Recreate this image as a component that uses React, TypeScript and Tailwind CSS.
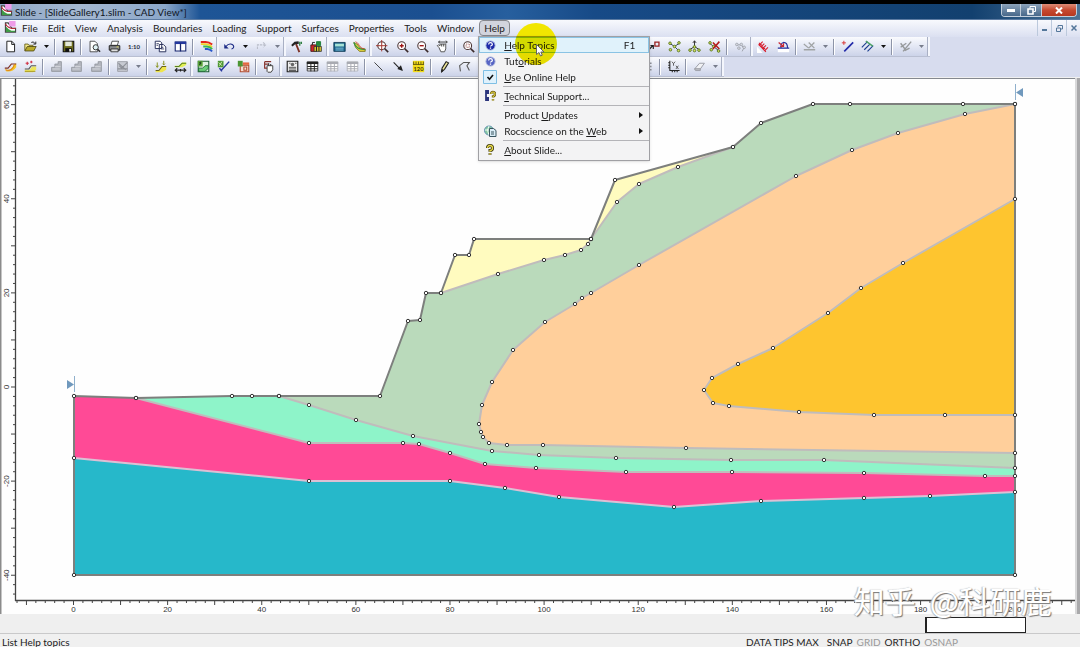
import React from 'react';

type ToolItem = { kind: 'tool'; icon: string; label: string } | { kind: 'caret'; muted?: boolean } | { kind: 'sep' } | { kind: 'end' };

const t = (icon: string, label: string): ToolItem => ({ kind: 'tool', icon, label });
const caret: ToolItem = { kind: 'caret' };
const mutedCaret: ToolItem = { kind: 'caret', muted: true };
const sep: ToolItem = { kind: 'sep' };
const end: ToolItem = { kind: 'end' };

const stroke = (d: string, color = '#222', width = 1.3) => <path d={d} fill="none" stroke={color} strokeWidth={width} />;
const dots = (points: number[][], color = '#4c6b1c', fill = '#d6e25a') =>
  points.map(([x, y]) => <circle key={`${x}-${y}`} cx={x} cy={y} r="1.6" fill={fill} stroke={color} />);

const magnifier = (
  <>
    <circle cx="7" cy="7" r="4.8" fill="#fff" stroke="#4a3434" strokeWidth="1.3" />
    <path d="M10.5 10.5l4.5 4.5" stroke="#3a2a2a" strokeWidth="2" />
  </>
);

const table = (c: string) => (
  <>
    <path d="M1.5 2.5h13v11h-13z" fill="#fff" stroke={c} />
    <path d="M1 2h14v3H1z" fill={c} />
    {stroke('M1.5 8h13M1.5 10.8h13M6 3v11M10.3 3v11', c, 1.2)}
  </>
);

const steps = (
  <>
    <path d="M2 14V9h4V5h4V2h4v12z" fill="#b5b8c0" stroke="#8f929a" />
    {stroke('M3 11h9M6 8h7', '#d6d8de', 1)}
  </>
);

const ICONS: Record<string, React.ReactNode> = {
  new: <path d="M3.5 1.5h6l3.5 3.5v9.5h-9.5zM9.5 1.5v4h3.5" fill="#fff" stroke="#222" strokeWidth="1.2" />,
  open: (
    <>
      <path d="M1 13V5h4l1 1.500h5V9" fill="#f4e98a" stroke="#5a5310" />
      <path d="M1 13.500l3-5.500h11l-3 5.500z" fill="#b8a92c" stroke="#4b4510" />
      {stroke('M9 3q3-2 4.500 1.500M14.500 2v3h-3', '#222', 1.2)}
    </>
  ),
  save: (
    <>
      <path d="M1.500 1.500h13v13h-13z" fill="#6b6b1c" stroke="#111" strokeWidth="1.3" />
      <path d="M4 2h8v5.500H4z" fill="#e4e8d8" />
      <path d="M4 10h8v4.500H4z" fill="#111" />
      <path d="M9 11h2v3H9z" fill="#fff" />
    </>
  ),
  preview: (
    <>
      <path d="M2.500 1.500h6l3 3v10h-9z" fill="#fff" stroke="#333" />
      <circle cx="9.500" cy="9" r="3.2" fill="#dff1f4" stroke="#333" strokeWidth="1.2" />
      {stroke('M11.800 11.300l3 3.200', '#333', 2)}
    </>
  ),
  print: (
    <>
      <path d="M5 1.500h8l-1.500 5H3.500z" fill="#fff" stroke="#333" />
      <path d="M1.500 7h13v5.500h-13z" fill="#8a8c90" stroke="#222" strokeWidth="1.2" />
      <path d="M3.500 11h9v3.500h-9z" fill="#e0e0e0" stroke="#222" />
      <path d="M10.500 8.500h2.500" stroke="#f5e94d" />
    </>
  ),
  copy: (
    <>
      <path d="M1.500 1.500h6l2 2v7h-8zM6.500 5.500h5l3 3v6h-8z" fill="#fff" stroke="#28305a" strokeWidth="1.2" />
      {stroke('M3 4.500h3M3 6.500h2M8.500 9h3M8.500 11h4', '#28305a', 1)}
    </>
  ),
  tile: (
    <>
      <path d="M1.500 2.500h13v11h-13z" fill="#fff" stroke="#16256e" strokeWidth="1.3" />
      <path d="M1 2h14v3H1z" fill="#24389e" />
      {stroke('M8 4v10', '#16256e', 1.6)}
    </>
  ),
  contours: (
    <>
      {stroke('M1 2.500h6q4 0 8 3', '#e4261c', 2.4)}
      {stroke('M1 5h6q4 0 8 3.500', '#f2d42c', 2)}
      {stroke('M4 8h4q4 0 7 3', '#3cbb4c', 2.4)}
      {stroke('M6 11h3q3 0 6 3', '#2a58cc', 2.4)}
    </>
  ),
  undo: (
    <>
      {stroke('M3.500 8q3-3.500 6-3 4.500 1 3.500 4-.5 1.500-2.500 2', '#1d2c86', 1.4)}
      <path d="M1.500 5v5.500h5.500z" fill="#1d2c86" />
    </>
  ),
  redo: <g fill="none" stroke="#b9bdc9" strokeWidth="1.3"><path d="M3 11V6h9M10 3l3 3-3 3" strokeDasharray="3 1" /></g>,
  hammer: (
    <>
      {stroke('M7.500 5l4 10', '#7c2f22', 2.2)}
      <path d="M1.500 6l4-4 5-.5.5 3-5 1L3 8z" fill="#222" />
      {stroke('M12 2v5M14 2v3', '#2f7f42', 1.6)}
    </>
  ),
  compute: (
    <>
      <path d="M1 6h7v8H1z" fill="#d3252b" stroke="#3a1111" />
      <path d="M5 8h9v6H5z" fill="#dbc62e" stroke="#333" />
      <path d="M8 2h5v5H8z" fill="#258a3a" stroke="#173" />
      {stroke('M3 6V3h3M8 14V8M11 14V8', '#222', 1.2)}
    </>
  ),
  calculator: (
    <>
      <path d="M1 3h14v11H1z" fill="#175f88" stroke="#0e3a55" />
      <path d="M2.500 4.500h11v3.500h-11z" fill="#a6e2d6" />
      {stroke('M3 10h10M3 12.300h10', '#86c5df', 1.2)}
    </>
  ),
  interpret: (
    <>
      <path d="M1 3l4 2 4 5 6 1v3H8L3 9z" fill="#e6d83c" stroke="#786d18" />
      {stroke('M1 3q3 7 8 8t6 1', '#2f9447', 1.5)}
      {stroke('M3 2q3 1 5 5t6 4', '#d6442d', 1)}
    </>
  ),
  zoomAll: <>{magnifier}{stroke('M7 0v14M0 7h14', '#a1352f', 1.2)}</>,
  zoomIn: <>{magnifier}{stroke('M7 4.500v5M4.500 7h5', '#9d1717', 1.7)}</>,
  zoomOut: <>{magnifier}{stroke('M4.500 7h5', '#9d1717', 1.7)}</>,
  pan: (
    <>
      <path d="M3.500 9l-2-2 1.500-1 2 1V5h7v6l-1.500 3.500H6z" fill="#fff" stroke="#555" strokeWidth="1.2" />
      {stroke('M3 2.500h10M5 1L3 2.500 5 4M12 1l2 1.500L12 4M7 8V5M9.500 8V5', '#444', 1.2)}
    </>
  ),
  zoomWindow: <>{magnifier}<path d="M5 5h4v4H5z" fill="none" stroke="#8a2c2c" strokeDasharray="1 1" /></>,
  move: (
    <>
      <path d="M8.500 2.500h5v5h-5z" fill="none" stroke="#922" strokeWidth="1.6" />
      {stroke('M1 12l5-5M3 7h3.500v4', '#222', 1.5)}
    </>
  ),
  addVertex: <>{stroke('M2 4l6 4 6-4M8 8l5 5', '#345', 1.2)}{dots([[2.5, 4], [8, 8], [13.5, 3.5], [13, 13], [3, 12]])}</>,
  moveVertex: <>{stroke('M2 12l6-4 6 4M8 8V1M6 3.500L8 1l2 2.500', '#333', 1.2)}{dots([[2.5, 12.5], [8, 8.5], [13.5, 12.5], [8, 13]])}</>,
  deleteVertex: (
    <>
      {stroke('M2 4l11 9', '#345', 1.2)}
      {dots([[2.5, 3.5], [7, 8], [13, 13.5], [4, 12]])}
      {stroke('M6 3l8 8M14 2L6 11', '#b51c1c', 1.9)}
    </>
  ),
  vertexOff: <>{stroke('M3 6h6l3 4-2 4', '#9da1ab', 1.2)}{dots([[3.5, 5.5], [9, 5.5], [12.5, 9], [6, 10]], '#9da1ab', '#d8dae2')}</>,
  load: (
    <>
      <path d="M0 8l7 8H0z" fill="#fff" />
      {stroke('M2 5.500l9 9', '#d71f2f', 1.4)}
      {stroke('M3 6l4-4M5 8.500l4-4M7 10.500l4-4M9.500 13l4-4M3 3.500V6h3M7 8v2.500h3', '#d71f2f', 1.4)}
    </>
  ),
  loadEdit: (
    <>
      <path d="M1 11h14v4H1z" fill="#fff" />
      {stroke('M1 10h14M5 10q-1-6 3-7 5 0 5 7', '#26309a', 1.4)}
      {stroke('M2 3l6 5M8 4v4H4', '#cc2630', 1.5)}
    </>
  ),
  supportOff: <>{stroke('M1 5l6 5M1 12h14M7 3l7 7M14 3l-7 7', '#a0a3a4', 1.6)}</>,
  addSupport: <>{stroke('M4 14L15 3', '#2229a8', 2)}{stroke('M3.500 1v5M1 3.500h5', '#d83838', 1.2)}</>,
  pattern: (
    <>
      {stroke('M1 9l7-7M4 12l7-7M8 14l7-7', '#1d3f8f', 1.4)}
      {stroke('M6 1.500l8.500 6', '#4ca367', 1.8)}
    </>
  ),
  cutOff: <>{stroke('M5 14L15 2M2 4l6 8M9 4l-7 5M7 13l6-3', '#96999b', 1.7)}</>,
  surface: (
    <>
      <path d="M1 11q7 4 11-5l3-2v5q-4 6-12 5z" fill="#f4c527" />
      {stroke('M1 10h4l4-5h6', '#7d3026', 1.3)}
      {stroke('M2 12q8 3 11-7', '#e08a1c', 1.4)}
    </>
  ),
  surfaces: (
    <>
      <path d="M1 12h6l3-4h5v4l-4 3H1z" fill="#ece55c" />
      {stroke('M1 11h5l3-4h6', '#555', 1.3)}
      {stroke('M2 4h4M4 2v4M9 1v3M7.500 2.500h3', '#d13245', 1.4)}
      {stroke('M1 14h13', '#a99a25', 1.2)}
    </>
  ),
  steps,
  gridOff: (
    <>
      <path d="M2 2h12v12H2z" fill="#c7cad2" stroke="#9699a1" />
      {stroke('M3 4l9 8M14 3l-7 7-3-3M2 11h12', '#8d9098', 1.4)}
    </>
  ),
  slopeMark: (
    <>
      <path d="M2 13h4l4-5h5v4l-5 3H2z" fill="#efe54c" />
      {stroke('M2 13h4l4-5h5', '#6a641a', 1.3)}
      {stroke('M4 3v6M2.500 7L4 9l1.500-2M12 1v5M10.500 4.500L12 6l1.500-1.500', '#8a9420', 1.2)}
    </>
  ),
  slopeLimits: (
    <>
      <path d="M1 7h5l4-4h5v3l-5 3H1z" fill="#e3ef55" />
      {stroke('M1 8h5l4-4h5', '#56801e', 1.3)}
      {stroke('M1 12.500h14M4 10l-2.500 2.500L4 15M12 10l2.500 2.500L12 15M8 11v3', '#222', 1.4)}
    </>
  ),
  material: (
    <>
      <path d="M1.500 1.500h13v13h-13z" fill="#dff2e0" stroke="#1a5e30" strokeWidth="1.3" />
      <path d="M1 1h6v7H1z" fill="#5aa33a" />
      <path d="M2 10h5l3-3h4v3l-4 4H2z" fill="#6ccf79" stroke="#1a5e30" />
      {stroke('M3 3l2 2M5 2L3 6', '#1d401d')}
    </>
  ),
  assign: (
    <>
      <path d="M1 1h7v8H1z" fill="#4c9634" />
      {stroke('M2 3l4 4M6 2L3 7', '#d9ecb7', 1.2)}
      {stroke('M5 13L15 2M3 10l3 4', '#2a3aa0', 1.8)}
    </>
  ),
  properties: (
    <>
      <path d="M4 6.500h10.500v8H4z" fill="#f9ded2" stroke="#b04a2c" strokeWidth="1.3" />
      <path d="M7 3h8v3H7z" fill="#e5683f" />
      <path d="M1 1h6v7H1z" fill="#4c9634" />
      {stroke('M8.500 8.500h3.500v4H8.500z', '#b04a2c')}
    </>
  ),
  hand: (
    <>
      <path d="M5 14V7h7v5l-2 3H6z" fill="#fff" stroke="#444" strokeWidth="1.2" />
      {stroke('M2 2h8M2 5h5M2 2v8h3', '#86332c', 1.4)}
      {stroke('M7 7V4M9.500 7V5', '#333', 1.3)}
    </>
  ),
  picture: (
    <>
      <path d="M1.500 1.500h13v13h-13z" fill="#f1f1f1" stroke="#222" strokeWidth="1.4" />
      <circle cx="8" cy="5.500" r="2.2" fill="#666" />
      {stroke('M3.500 9h9M3.500 11h9M3.500 13h9M4 4h1.500M11 4h2', '#333', 1)}
    </>
  ),
  table: table('#222'),
  tableOff: table('#a9abb2'),
  line: stroke('M3 3l10 10', '#444', 1.2),
  arrow: <>{stroke('M2 3l7 7', '#222', 1.3)}<path d="M13.500 13.500L6.500 11l4.500-4.500z" fill="#222" /></>,
  dimension: (
    <>
      <path d="M1 1h14v14H1z" fill="#f2dc1c" />
      {stroke('M2 2v4M5 2v3M8 2v4M11 2v3M14 2v4M1.500 5.500h13', '#5f560b', 1.1)}
      <text x="8" y="13.500" fontSize="7" fontWeight="700" textAnchor="middle" fill="#413b05">120</text>
    </>
  ),
  pencil: <><path d="M5 10l5-8 3 1.500-5 8-3.500 3z" fill="#efe89b" stroke="#222" strokeWidth="1.3" />{stroke('M4.500 14.500l1-3', '#222', 2)}</>,
  polyline: stroke('M3 14L2 7l5-4h7l-3 4 3 6', '#555', 1.3),
  axes: (
    <>
      {stroke('M3.500 1v12h12M1.500 3.500h2M1.500 6.500h2M1.500 9.500h2M6.500 15v-2M9.500 15v-2M12.500 15v-2', '#222', 1.3)}
      {stroke('M6 2l2 2.500L10 2M8 4.500V7M11 7l3 4M14 7l-3 4', '#444', 1)}
    </>
  ),
  eraser: <path d="M2 11l6-7h6l-5 7zM2 11h7v2H3z" fill="#f1f2f5" stroke="#94979f" strokeWidth="1.1" />,
  snap: stroke('M12 3v2M12 7v2M12 11v2', '#8d9098', 2),
};

const MAIN_TOOLS: ToolItem[] = [
  t('new', 'New'), t('open', 'Open'), caret, sep, t('save', 'Save'), sep,
  t('preview', 'Print Preview'), t('print', 'Print'), t('scale', 'Drawing Scale'), sep,
  t('copy', 'Copy'), t('tile', 'Tile Windows'), sep, t('contours', 'Display Options'), end,
  t('undo', 'Undo'), caret, t('redo', 'Redo'), mutedCaret, end,
  t('hammer', 'Project Settings'), t('compute', 'Compute'), end,
  t('calculator', 'Calculator'), t('interpret', 'Interpret'), end,
  t('zoomAll', 'Zoom All'), t('zoomIn', 'Zoom In'), t('zoomOut', 'Zoom Out'), t('pan', 'Pan'), sep,
  t('zoomWindow', 'Zoom Window'), t('zoomAll', 'Zoom Excavation'), t('zoomIn', 'Zoom Extents'), sep,
  t('line', 'External Boundary'), t('line', 'Material Boundary'), t('line', 'Water Table'),
  t('line', 'Piezometric Line'), t('line', 'Tension Crack'), t('line', 'Move Boundary'),
  t('move', 'Move To'), t('addVertex', 'Add Vertices'), t('moveVertex', 'Move Vertices'),
  t('deleteVertex', 'Delete Vertices'), sep, t('vertexOff', 'Edit Limits'), end,
  t('load', 'Add Load'), t('loadEdit', 'Edit Load'), sep, t('supportOff', 'Delete Load'), mutedCaret, sep,
  t('addSupport', 'Add Support'), t('pattern', 'Support Pattern'), caret, sep, t('cutOff', 'Delete Support'), mutedCaret, end,
];

const DRAW_TOOLS: ToolItem[] = [
  t('surface', 'Surface Options'), t('surfaces', 'Add Surface'), sep,
  t('steps', 'Add Grid'), t('steps', 'Edit Grid'), t('steps', 'Move Grid'), sep,
  t('gridOff', 'Delete Grid'), mutedCaret, sep, t('slopeMark', 'Move Limits'), t('slopeLimits', 'Slope Limits'), end,
  t('material', 'Define Materials'), t('assign', 'Assign Properties'), t('properties', 'Define Properties'), sep,
  t('hand', 'Show Values'), end, t('picture', 'Add Image'), t('table', 'Material Table'),
  t('tableOff', 'Support Table'), t('tableOff', 'Hydraulic Table'), sep,
  t('line', 'Line Tool'), t('arrow', 'Arrow Tool'), t('dimension', 'Dimension Tool'), sep,
  t('pencil', 'Pencil Tool'), t('polyline', 'Polyline Tool'), t('line', 'Polygon Tool'),
  t('line', 'Rectangle Tool'), t('line', 'Ellipse Tool'), t('line', 'Text Tool'), t('line', 'Text Box Tool'),
  t('picture', 'Export Tools'), t('picture', 'Import Tools'), t('line', 'Auto Update'), end,
  t('snap', 'Snap Grid'), sep, t('axes', 'Axes'), sep, t('eraser', 'Erase Tools'), mutedCaret, end,
];

const Toolbar: React.FC<{ items: ToolItem[]; label: string }> = ({ items, label }) => (
  <div role="toolbar" aria-label={label} className="flex h-5 items-center self-start overflow-hidden border-b border-[#b9bfd2] bg-gradient-to-b from-[#fafbfe] via-[#e3e7f4] to-[#ccd3e9]">
    {items.map((item, i) => {
      if (item.kind === 'sep') {
        return <span key={i} className="mx-[2px] h-4 w-[2px] shrink-0 border-l border-[#8d94a8] bg-white" />;
      }
      if (item.kind === 'end') {
        return <span key={i} className="h-5 w-[3px] shrink-0 border-l border-[#a9b0c4] bg-[#f4f6fc]" />;
      }
      if (item.kind === 'caret') {
        return (
          <button key={i} aria-label="More" className="flex h-5 w-3 shrink-0 items-center justify-center">
            <svg width="5" height="3" viewBox="0 0 5 3">
              <path d="M0 0h5L2.500 3z" fill={item.muted ? '#777c8b' : '#111'} />
            </svg>
          </button>
        );
      }
      return (
        <button key={i} aria-label={item.label} className="flex h-5 w-5 shrink-0 items-center justify-center">
          {item.icon === 'scale' ? (
            <span className="text-[6px] font-bold text-gray-800">1:10</span>
          ) : (
            <svg width="13" height="13" viewBox="0 0 16 16">{ICONS[item.icon]}</svg>
          )}
        </button>
      );
    })}
  </div>
);

const AppLogo: React.FC = () => (
  <svg width="13" height="12" viewBox="0 0 13 13" className="block shrink-0">
    <path d="M1 2v10h11V8H8L4 2z" fill="#fff" stroke="#444" strokeWidth="1.2" />
    <path d="M5 0h7v6H5z" fill="#ee9be8" />
    <path d="M1.500 6l3 3 3 1.500h4V12h-10z" fill="#3f9b45" />
    <path d="M1 3q3 6 11 5" fill="none" stroke="#b72b39" strokeWidth="1.2" />
  </svg>
);

const TitleBar: React.FC = () => (
  <header className="flex h-4 items-start border-b border-[#5c7ba2] bg-[linear-gradient(to_right,#8fa8c6_0,#a5b8d1_80px,#8ba7c9_165px,#1e5596_200px,#1b4f90_40%,#275f9e_47%,#174a87_55%,#12406f_90%,#4c7396_100%)]">
    <AppLogo />
    <h1 className="ml-[2px] flex-1 text-[10px] leading-4 text-[#10151d]">Slide - [SlideGallery1.slim - CAD View*]</h1>
    <div className="mr-[3px] flex h-[13px] overflow-hidden rounded-b border border-t-0 border-[#c3cfdc]">
      <button aria-label="Minimize" className="flex w-[19px] items-center justify-center border-r border-[#c3cfdc] bg-gradient-to-b from-[#8ca3bb] to-[#48688a]">
        <span className="h-[3px] w-2 bg-white" />
      </button>
      <button aria-label="Restore" className="flex w-[21px] items-center justify-center border-r border-[#c3cfdc] bg-gradient-to-b from-[#8ca3bb] to-[#48688a]">
        <svg width="9" height="9" viewBox="0 0 9 9" fill="none" stroke="#fff"><path d="M3 2.500v-2h5.500v5h-2" /><path d="M1 3h5v5H1z" strokeWidth="1.6" /></svg>
      </button>
      <button aria-label="Close" className="flex w-[34px] items-center justify-center bg-gradient-to-b from-[#dd8c77] via-[#c64a31] to-[#b8371f]">
        <svg width="8" height="7" viewBox="0 0 8 7"><path d="M1 .5l6 6M7 .5l-6 6" stroke="#fff" strokeWidth="2" /></svg>
      </button>
    </div>
  </header>
);

const HelpIcon: React.FC<{ color: string }> = ({ color }) => (
  <svg width="11" height="11" viewBox="0 0 12 12">
    <circle cx="6" cy="6" r="5" fill={color} stroke="#a9b4dc" />
    <path d="M4 4.800q0-2 2-2t2 1.700q0 1-1 1.500t-1 1.200M6 8.200v1.400" fill="none" stroke="#fff" strokeWidth="1.4" />
  </svg>
);

const MENU_ICONS: Record<string, React.ReactNode> = {
  topics: <HelpIcon color="#1b2aa8" />,
  tutorials: <HelpIcon color="#5865c4" />,
  check: (
    <svg width="14" height="14" viewBox="0 0 14 14">
      <path d="M.5.500h13v13H.500z" fill="#dff1fc" stroke="#7fbfe4" />
      <path d="M4.500 7l2 2.200L10 5" fill="none" stroke="#111" strokeWidth="1.6" />
    </svg>
  ),
  support: (
    <svg width="12" height="12" viewBox="0 0 12 12">
      <path d="M5 1H2v9h3M2 3h3M2 8h3" fill="none" stroke="#2c357c" strokeWidth="1.8" />
      <path d="M7 4q0-2 2-2t2 2-2 2.500v1M9 9v1.500" fill="none" stroke="#6d5f14" strokeWidth="2.4" />
      <path d="M7 4q0-2 2-2t2 2-2 2.500v1M9 9v1.500" fill="none" stroke="#eadb45" />
    </svg>
  ),
  web: (
    <svg width="13" height="12" viewBox="0 0 13 12">
      <circle cx="5" cy="5.500" r="4.5" fill="#86c8a2" stroke="#6793b4" />
      <path d="M1 5h8M5 1q-3 4 0 9" fill="none" stroke="#f1fbf6" />
      <path d="M5.500 3.500h4l2.500 2v6H5.500z" fill="#d9ecf6" stroke="#38545f" />
      <path d="M7 7h3M7 9h3" stroke="#38545f" />
    </svg>
  ),
  about: (
    <svg width="10" height="12" viewBox="0 0 10 12">
      <path d="M2.500 4q0-2.500 2.500-2.500T7.500 4 5 6.500v1.300M5 9.300v1.500" fill="none" stroke="#3d3709" strokeWidth="3" />
      <path d="M2.500 4q0-2.500 2.500-2.500T7.500 4 5 6.500v1.300M5 9.300v1.500" fill="none" stroke="#e6d94b" strokeWidth="1.3" />
    </svg>
  ),
};

type HelpEntry = { icon?: string; before?: string; key: string; after: string; shortcut?: string; submenu?: boolean; active?: boolean; divider?: boolean };

const HELP_MENU: HelpEntry[] = [
  { icon: 'topics', key: 'H', after: 'elp Topics', shortcut: 'F1', active: true },
  { icon: 'tutorials', before: 'Tut', key: 'o', after: 'rials' },
  { icon: 'check', key: 'U', after: 'se Online Help' },
  { icon: 'support', key: 'T', after: 'echnical Support...', divider: true },
  { before: 'Product ', key: 'U', after: 'pdates', submenu: true, divider: true },
  { icon: 'web', before: 'Rocscience on the ', key: 'W', after: 'eb', submenu: true },
  { icon: 'about', key: 'A', after: 'bout Slide...', divider: true },
];

const HelpMenu: React.FC = () => (
  <div role="menu" className="absolute -left-px top-4 z-20 w-[172px] border border-[#a0a0a4] bg-[#f3f3f4] pb-[2px] shadow-sm">
    {HELP_MENU.map((entry) => (
      <React.Fragment key={entry.after}>
        {entry.divider && <div className="my-px ml-6 h-px bg-[#b4b4b8]" />}
        <button
          role="menuitem"
          className={`flex h-4 w-full items-center border pr-[5px] text-left text-[10px] leading-none text-[#1c1c1c] ${entry.active ? 'border-[#8ac3e4] bg-[#e0f2fb]' : 'border-transparent'}`}
        >
          <span className="flex w-5 justify-center">{entry.icon && MENU_ICONS[entry.icon]}</span>
          <span className="ml-[4px] flex-1 whitespace-pre">
            {entry.before}
            <u>{entry.key}</u>
            {entry.after}
          </span>
          {entry.shortcut && <span className="mr-2">{entry.shortcut}</span>}
          {entry.submenu && (
            <svg width="4" height="6" viewBox="0 0 4 6"><path d="M0 0v6l4-3z" fill="#111" /></svg>
          )}
        </button>
      </React.Fragment>
    ))}
    {/* click highlight and pointer */}
    <div className="pointer-events-none absolute left-[36px] -top-[14px] h-[42px] w-[42px] rounded-full bg-[#f1e600] mix-blend-multiply" />
    <svg width="9" height="13" viewBox="0 0 9 13" className="pointer-events-none absolute left-[57px] top-[7px]">
      <path d="M.5.500v10l2.500-2 1.500 3.500 1.800-.8L4.800 8H8z" fill="#fff" stroke="#666" />
    </svg>
  </div>
);

const MENUS = ['File', 'Edit', 'View', 'Analysis', 'Boundaries', 'Loading', 'Support', 'Surfaces', 'Properties', 'Tools', 'Window', 'Help'];

const MenuBar: React.FC = () => (
  <nav className="flex h-[17px] items-start bg-gradient-to-b from-[#f8f9fd] to-[#dbe0f1]">
    <div className="ml-1 pt-px"><AppLogo /></div>
    <div className="flex flex-1">
      {MENUS.map((name) => (
        <div key={name} className="relative flex">
          <button className={`h-4 border px-[4px] text-[10px] leading-none text-[#222] ${name === 'Help' ? 'rounded-sm border-[#85868c] bg-[#d2d4dd]' : 'border-transparent'}`}>
            {name}
          </button>
          {name === 'Help' && <HelpMenu />}
        </div>
      ))}
    </div>
    <div className="flex h-4 text-[#54779a]">
      <button aria-label="Minimize view" className="flex w-[14px] items-center justify-center border-l border-[#bcc9dc]">
        <span className="mt-1 h-[2px] w-[5px] bg-current" />
      </button>
      <button aria-label="Restore view" className="flex w-[15px] items-center justify-center border-l border-[#bcc9dc]">
        <svg width="7" height="7" viewBox="0 0 7 7" fill="none" stroke="currentColor"><path d="M2 2V.500h4.500V4H5M.5 3h4v3.500h-4z" /></svg>
      </button>
      <button aria-label="Close view" className="flex w-[14px] items-center justify-center border-l border-[#bcc9dc]">
        <svg width="6" height="6" viewBox="0 0 6 6"><path d="M.5.500l5 5M5.500.500l-5 5" stroke="currentColor" strokeWidth="1.5" /></svg>
      </button>
    </div>
  </nav>
);

type Point = [number, number];

const GROUND: Point[] = [
  [74, 396], [136, 398], [232, 396], [252, 396], [279, 396], [380, 396], [408, 321], [420, 320], [426, 293], [441, 293],
  [455, 255], [469, 255], [474, 239], [591, 239], [615, 180], [733, 147], [761, 123], [813, 104], [850, 104], [963, 104], [1015, 104],
];
const LOWER_BENCH: Point[] = [[441, 293], [498, 274], [544, 260], [565, 255], [581, 250], [588, 244], [591, 239]];
const UPPER_BENCH: Point[] = [[591, 239], [617, 202], [639, 184], [678, 167], [733, 147]];
const SAND: Point[] = [
  [1015, 104], [965, 114], [898, 133], [852, 150], [796, 176], [639, 265], [591, 293], [582, 298], [575, 304], [545, 322], [513, 350],
  [492, 382], [482, 405], [479, 424], [481, 432], [483, 437], [489, 443], [507, 445], [543, 445], [686, 448], [1015, 453],
];
const CORE: Point[] = [
  [1015, 199], [903, 263], [861, 288], [828, 313], [773, 348], [738, 364], [712, 378], [704, 390], [713, 403], [729, 406],
  [799, 412], [874, 415], [945, 415], [1015, 415],
];
const CLAY_TOP: Point[] = [[279, 396], [309, 405], [356, 420], [413, 436], [492, 451], [539, 455], [616, 458], [731, 460], [824, 460], [1015, 468]];
const CLAY_BASE: Point[] = [
  [136, 398], [309, 443], [403, 443], [419, 444], [450, 453], [485, 464], [536, 468], [626, 472], [732, 472], [864, 473], [985, 476], [1015, 476],
];
const BEDROCK: Point[] = [[74, 458], [309, 481], [450, 481], [505, 488], [559, 497], [674, 507], [761, 501], [864, 498], [930, 496], [1015, 492]];
const BOTTOM: Point[] = [[1015, 575], [74, 575]];

const LAYERS = [LOWER_BENCH, UPPER_BENCH, SAND, CORE, CLAY_TOP, CLAY_BASE, BEDROCK];
const pts = (...lists: Point[][]) => lists.flat().map((p) => p.join(',')).join(' ');

const ORIGIN_X = 73.5;
const ORIGIN_Y = 387;
const UNIT = 4.706;

const range = (from: number, to: number) => Array.from({ length: (to - from) / 2 + 1 }, (_, i) => from + i * 2);
const tick = (v: number) => (v % 10 === 0 ? 4 : 2);

const Rulers: React.FC = () => (
  <g stroke="#444" fontSize="8" fontFamily="'Liberation Sans', Arial, sans-serif">
    <path d="M15.500 78v523M15 600.500h1060" strokeWidth="1.3" />
    {range(-12, 212).map((v) => {
      const x = ORIGIN_X + v * UNIT;
      return (
        <g key={v}>
          <path d={`M${x} 601v${tick(v)}`} />
          {v % 20 === 0 && <text x={x} y="612" textAnchor="middle" fill="#333" stroke="none">{v}</text>}
        </g>
      );
    })}
    {range(-44, 64).map((v) => {
      const y = ORIGIN_Y - v * UNIT;
      return (
        <g key={v}>
          <path d={`M15 ${y}h-${tick(v)}`} />
          {v % 20 === 0 && (
            <text transform={`translate(9 ${y}) rotate(-90)`} textAnchor="middle" fill="#333" stroke="none">{v}</text>
          )}
        </g>
      );
    })}
  </g>
);

const SlopeModel: React.FC = () => (
  <svg viewBox="0 78 1080 536" className="block w-full bg-[#fefefe]" role="img" aria-label="Slope model">
    <polygon points={pts(GROUND, BOTTOM)} fill="#badabb" />
    <polygon points={pts(GROUND.slice(9, 14), [...LOWER_BENCH].reverse())} fill="#fffbbf" />
    <polygon points={pts(GROUND.slice(13, 16), [...UPPER_BENCH].reverse())} fill="#fffbbf" />
    <polygon points={pts(SAND)} fill="#ffcf9b" />
    <polygon points={pts(CORE)} fill="#fec52f" />
    <polygon points={pts(GROUND.slice(1, 5), CLAY_TOP, [...CLAY_BASE].reverse())} fill="#8ef4c9" />
    <polygon points={pts([[74, 396]], CLAY_BASE, [...BEDROCK].reverse())} fill="#ff4a96" />
    <polygon points={pts(BEDROCK, BOTTOM)} fill="#26b8ca" />
    <g fill="none" stroke="#c0bcbc" strokeWidth="2" strokeLinejoin="round">
      {LAYERS.map((layer, i) => (
        <polyline key={i} points={pts(layer)} stroke={layer === BEDROCK ? '#dcc0d4' : undefined} />
      ))}
    </g>
    <polygon points={pts(GROUND, BOTTOM)} fill="none" stroke="#7d7f7d" strokeWidth="2" strokeLinejoin="round" />
    <g fill="#fff" stroke="#333">
      {[GROUND, ...LAYERS, BOTTOM].flat().map(([x, y], i) => (
        <circle key={i} cx={x} cy={y} r="1.7" />
      ))}
    </g>
    <g fill="#7099bd" stroke="#8fb0cc">
      <path d="M74.500 376v16M1015.500 84v16" fill="none" />
      <path d="M67 380v9l7-4.500zM1023 88v9l-7-4.500z" stroke="none" />
    </g>
    <Rulers />
    <path d="M0 78h1080" stroke="#85898f" strokeWidth="2" />
    <path d="M0 78h1.500v536H0z" fill="#8b8b8b" />
    <path d="M1075 78h5v536h-5z" fill="#d9d9da" />
    <path d="M1077 78h3v536h-3z" fill="#a9a9ab" />
  </svg>
);

const Watermark: React.FC = () => (
  <div className="pointer-events-none absolute right-[28px] -bottom-[4px] z-10 flex items-center gap-[14px] font-['Noto_Sans_CJK_SC',sans-serif] text-[31px] leading-[36px] text-white [text-shadow:1px_1px_1px_#777,-1px_0_1px_#bbb]">
    <span>知乎</span>
    <span>@科研鹿</span>
  </div>
);

const StatusBar: React.FC = () => (
  <footer className="flex h-[14px] items-center border-t border-[#c9c9ca] bg-[#f0f0f0] pt-[2px] text-[10px] leading-none text-[#222]">
    <span className="flex-1 pl-[2px]">List Help topics</span>
    <div className="mr-[122px] flex gap-1 whitespace-nowrap">
      <button className="mr-1">DATA TIPS MAX</button>
      <button>SNAP</button>
      <button className="text-[#999]">GRID</button>
      <button>ORTHO</button>
      <button className="text-[#999]">OSNAP</button>
    </div>
  </footer>
);

export default function App() {
  return (
    <div className="min-h-screen overflow-hidden border-t-4 border-black bg-[#f0f0f0] font-['Lato','Noto_Sans',sans-serif]">
      <TitleBar />
      <MenuBar />
      <div className="flex flex-col bg-[#d7dcee]">
        <Toolbar items={MAIN_TOOLS} label="Standard" />
        <Toolbar items={DRAW_TOOLS} label="Drawing" />
      </div>
      <main className="relative mt-px">
        <SlopeModel />
        <Watermark />
      </main>
      <div className="flex h-[19px] items-end justify-end bg-[#efefef] pr-[54px]">
        <input aria-label="Prompt" className="h-4 w-[101px] border border-l-2 border-[#222] bg-white px-1 text-[10px] outline-none" />
      </div>
      <StatusBar />
    </div>
  );
}
